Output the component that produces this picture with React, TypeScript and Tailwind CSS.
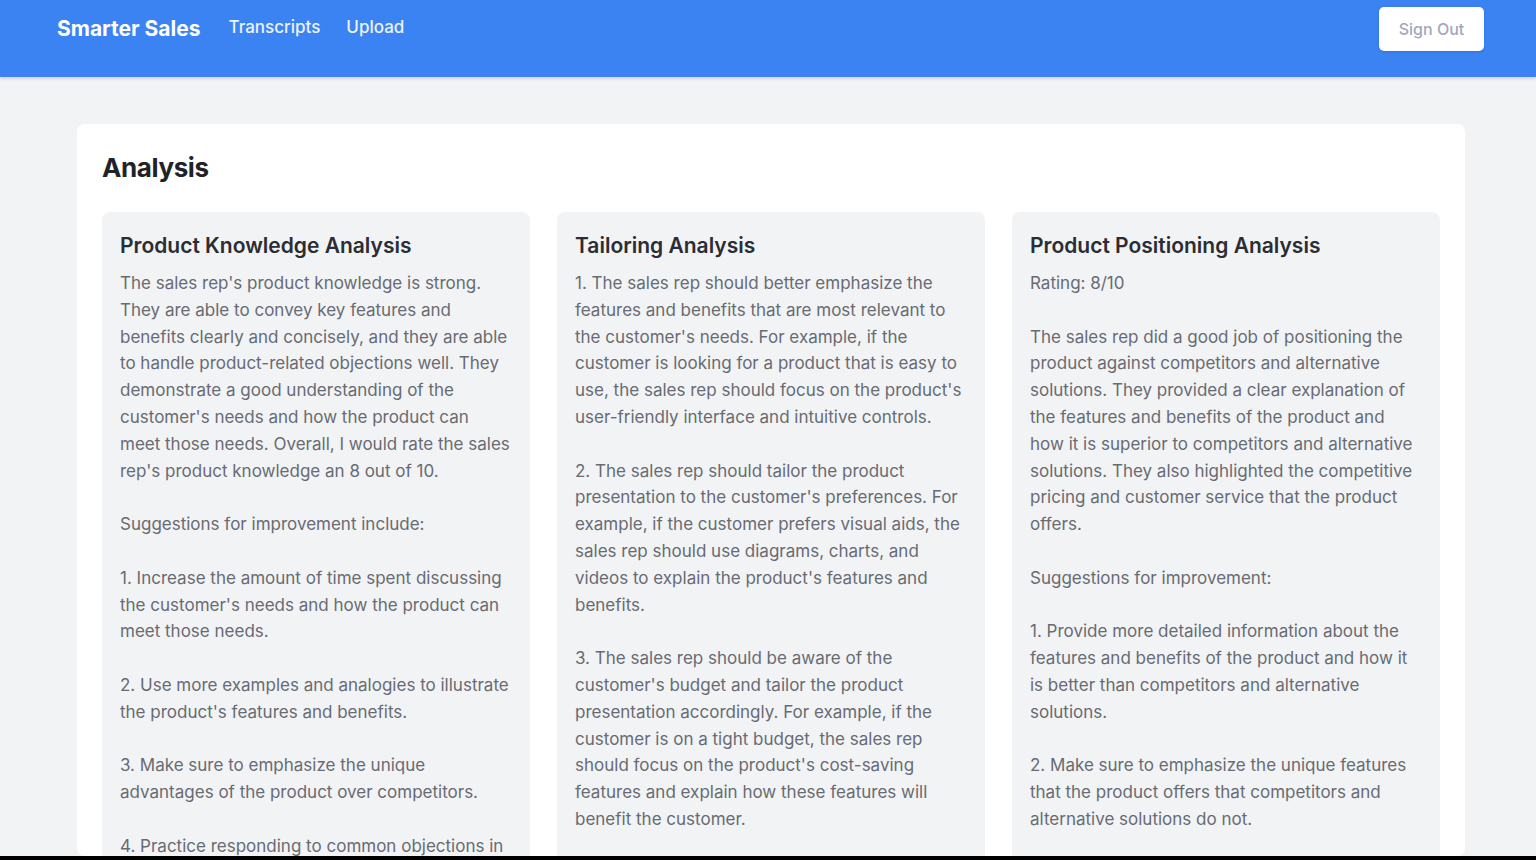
import React from "react";

const cards: { title: string; paras: string[][] }[] = [
  {
    title: "Product Knowledge Analysis",
    paras: [
      [
        "The sales rep's product knowledge is strong.",
        "They are able to convey key features and",
        "benefits clearly and concisely, and they are able",
        "to handle product-related objections well. They",
        "demonstrate a good understanding of the",
        "customer's needs and how the product can",
        "meet those needs. Overall, I would rate the sales",
        "rep's product knowledge an 8 out of 10.",
      ],
      ["Suggestions for improvement include:"],
      [
        "1. Increase the amount of time spent discussing",
        "the customer's needs and how the product can",
        "meet those needs.",
      ],
      [
        "2. Use more examples and analogies to illustrate",
        "the product's features and benefits.",
      ],
      [
        "3. Make sure to emphasize the unique",
        "advantages of the product over competitors.",
      ],
      [
        "4. Practice responding to common objections in",
        "order to be better prepared for the customer's",
        "questions.",
      ],
    ],
  },
  {
    title: "Tailoring Analysis",
    paras: [
      [
        "1. The sales rep should better emphasize the",
        "features and benefits that are most relevant to",
        "the customer's needs. For example, if the",
        "customer is looking for a product that is easy to",
        "use, the sales rep should focus on the product's",
        "user-friendly interface and intuitive controls.",
      ],
      [
        "2. The sales rep should tailor the product",
        "presentation to the customer's preferences. For",
        "example, if the customer prefers visual aids, the",
        "sales rep should use diagrams, charts, and",
        "videos to explain the product's features and",
        "benefits.",
      ],
      [
        "3. The sales rep should be aware of the",
        "customer's budget and tailor the product",
        "presentation accordingly. For example, if the",
        "customer is on a tight budget, the sales rep",
        "should focus on the product's cost-saving",
        "features and explain how these features will",
        "benefit the customer.",
      ],
    ],
  },
  {
    title: "Product Positioning Analysis",
    paras: [
      ["Rating: 8/10"],
      [
        "The sales rep did a good job of positioning the",
        "product against competitors and alternative",
        "solutions. They provided a clear explanation of",
        "the features and benefits of the product and",
        "how it is superior to competitors and alternative",
        "solutions. They also highlighted the competitive",
        "pricing and customer service that the product",
        "offers.",
      ],
      ["Suggestions for improvement:"],
      [
        "1. Provide more detailed information about the",
        "features and benefits of the product and how it",
        "is better than competitors and alternative",
        "solutions.",
      ],
      [
        "2. Make sure to emphasize the unique features",
        "that the product offers that competitors and",
        "alternative solutions do not.",
      ],
    ],
  },
];

export default function App() {
  return (
    <div
      className="h-[860px] overflow-hidden flex flex-col bg-[#f2f3f5]"
      style={{ fontFamily: "Inter, 'Liberation Sans', sans-serif" }}
    >
      <header className="h-[77px] shrink-0 bg-[#3b82f3] shadow-[0_2px_3px_rgba(0,0,0,0.12)] flex items-start justify-between pl-[57px] pr-[52px] pt-[7px]">
        <div className="flex items-center h-[44px]">
          <span className="text-white font-bold text-[21px]">Smarter Sales</span>
          <nav className="flex items-center gap-[26px] ml-[28px] -mt-[2px]">
            <a className="text-white/90 text-[17px] font-medium">Transcripts</a>
            <a className="text-white/90 text-[17px] font-medium">Upload</a>
          </nav>
        </div>
        <button className="h-[44px] w-[105px] bg-white rounded-[5px] text-[#a3a6bd] text-[16px] font-medium shadow-sm">
          Sign Out
        </button>
      </header>
      <main className="flex-1 min-h-0 pt-[47px] pl-[77px] pr-[71px]">
        <section className="bg-white rounded-[8px] px-[25px] pt-[26px] pb-[26px] h-full">
          <h1 className="text-[26px] leading-[36px] font-bold text-[#1f2329] tracking-[-0.4px]">Analysis</h1>
          <div className="grid grid-cols-3 gap-[27px] mt-[26px]">
            {cards.map((c) => (
              <div key={c.title} className="bg-[#f2f3f5] rounded-[8px] px-[18px] pt-[20px] pb-[18px]">
                <h2 className="text-[21px] leading-[28px] font-semibold text-[#2a2d33]">{c.title}</h2>
                <div className="mt-[10px] text-[17px] leading-[26.8px] text-[#676b73] flex flex-col gap-[26.8px]">
                  {c.paras.map((p, i) => (
                    <p key={i}>
                      {p.map((l, j) => (
                        <span key={j} className="block whitespace-nowrap">
                          {l}
                        </span>
                      ))}
                    </p>
                  ))}
                </div>
              </div>
            ))}
          </div>
        </section>
      </main>
      <div className="h-[4px] shrink-0 bg-black" />
    </div>
  );
}
